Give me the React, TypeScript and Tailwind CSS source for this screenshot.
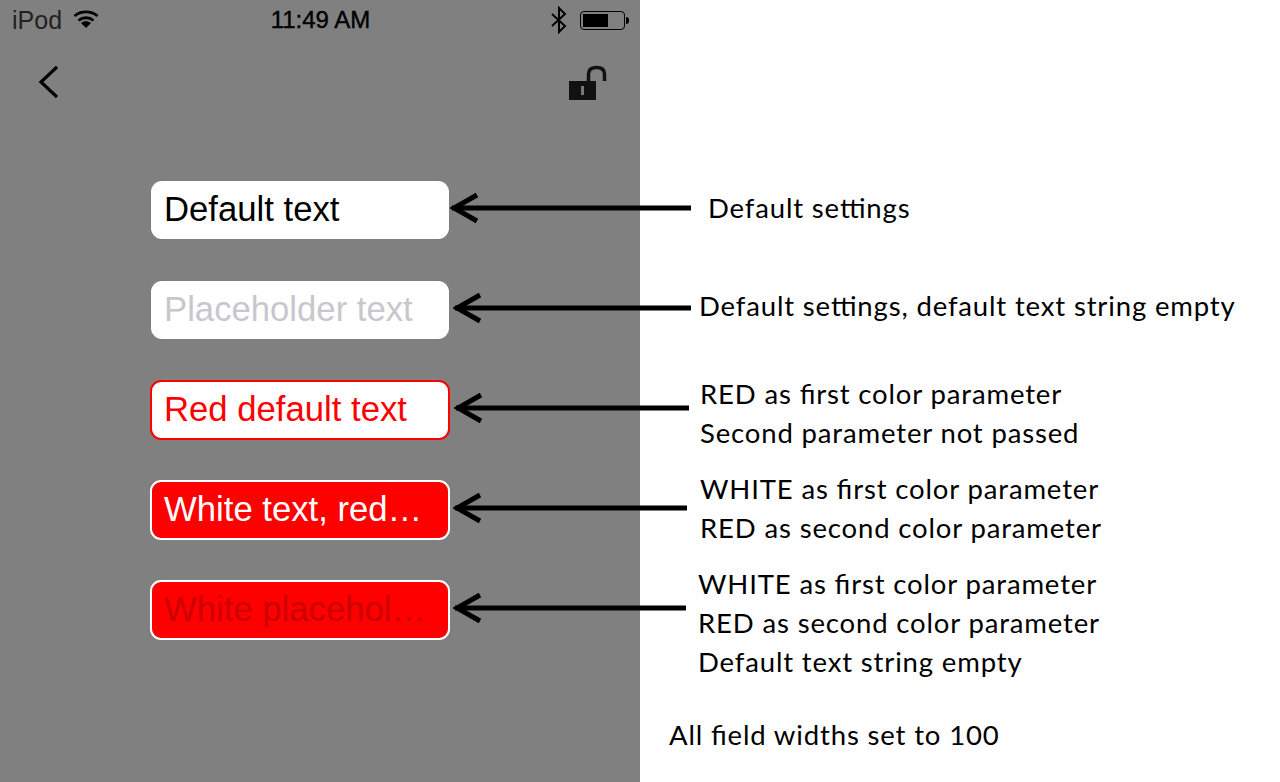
const fields = [
  {
    text: "Default text",
    box: "h-[58px] w-[298px] pl-[13px] bg-white text-black",
    arrow: "ml-[1px] w-[241px]",
    width: 241,
  },
  {
    text: "Placeholder text",
    box: "h-[58px] w-[298px] pl-[13px] bg-white text-[#c7c7cd]",
    arrow: "ml-[4px] w-[238px]",
    width: 238,
  },
  {
    text: "Red default text",
    box: "-m-[1px] h-[60px] w-[300px] pl-[12px] bg-white text-[#ff0000] border-2 border-[#ff0000]",
    arrow: "ml-[5px] w-[235px]",
    width: 235,
  },
  {
    text: "White text, red…",
    box: "-m-[1px] h-[60px] w-[300px] pl-[12px] bg-[#ff0000] text-white border-2 border-white",
    arrow: "ml-[4px] w-[234px]",
    width: 234,
  },
  {
    text: "White placehol…",
    box: "-m-[1px] h-[60px] w-[300px] pl-[12px] bg-[#ff0000] text-[#cc0000] border-2 border-white",
    arrow: "ml-[4px] w-[233px]",
    width: 233,
  },
];

const Arrow = ({ className, width }: { className: string; width: number }) => (
  <svg className={`absolute left-full top-0 -mt-[2px] h-[58px] ${className}`} viewBox={`0 0 ${width} 58`} fill="none" stroke="#000">
    <path d={`M2 29H${width}`} strokeWidth="5" />
    <path d="M27 16L4 29L27 42" strokeWidth="5" />
  </svg>
);

const StatusBar = () => (
  <div className="flex h-10 items-center justify-between pl-3 pr-[11px] text-[#000] font-['Liberation_Sans',sans-serif]">
    <div className="flex w-[200px] items-center">
      <span className="text-[25px] font-light leading-none text-[#222]">iPod</span>
      <svg className="ml-[11px] -mt-[3px] h-[18px] w-[26px]" viewBox="0 0 26 18" fill="none" stroke="#000" strokeWidth="2.8">
        <path d="M1.5 6C8 .6 18 .6 24.500 6" />
        <path d="M5.500 10.500C10 6.800 16 6.800 20.500 10.500" />
        <path d="M13 18L8 13C11 10.800 15 10.800 18 13Z" fill="#000" stroke="none" />
      </svg>
    </div>
    <span className="text-[24px] leading-none [-webkit-text-stroke:0.4px_#000]">11:49 AM</span>
    <div className="flex w-[200px] items-center justify-end">
      <svg className="mr-[12px] h-[28px] w-[18px]" viewBox="0 0 18 28" fill="none" stroke="#000" strokeWidth="2">
        <path d="M2 8L15 20L9 26V2L15 8L2 20" />
      </svg>
      <div className="flex items-center">
        <div className="h-[19px] w-[45px] rounded-[4px] border border-black p-[2px]">
          <div className="h-full w-[25px] bg-black" />
        </div>
        <div className="ml-[1px] h-[7px] w-[3px] rounded-r-full bg-black" />
      </div>
    </div>
  </div>
);

const NavBar = () => (
  <div className="mt-5 flex h-[44px] items-center justify-between pl-[38px] pr-[31px]">
    <svg className="h-[34px] w-[20px]" viewBox="0 0 20 34" fill="none" stroke="#000" strokeWidth="3.2">
      <path d="M19 2L3 17L19 32" />
    </svg>
    <svg className="mt-[1px] h-[36px] w-[40px]" viewBox="0 0 40 36">
      <rect x="0" y="16" width="27" height="19" fill="#111" />
      <rect x="12" y="21" width="3" height="9" fill="#777" />
      <path d="M19.500 16V9C19.500 4.500 22.500 2.500 27.500 2.500C33 2.500 35.500 5 35.500 9V16" fill="none" stroke="#111" strokeWidth="3.500" />
    </svg>
  </div>
);

const Label = ({ lines, className }: { lines: string[]; className: string }) => (
  <div className={`absolute ${className}`}>
    {lines.map((line) => (
      <div key={line} className="whitespace-nowrap">{line}</div>
    ))}
  </div>
);

export default function App() {
  return (
    <div className="flex h-[782px] w-[1280px] overflow-hidden bg-white">
      <div className="relative z-10 h-full w-[640px] bg-[#808080]">
        <StatusBar />
        <NavBar />
        <div className="mt-[77px] flex flex-col gap-[42px] pl-[151px]">
          {fields.map((f) => (
            <div key={f.text} className="relative h-[58px] w-[298px]">
              <div className={`flex items-center rounded-[11px] font-['Liberation_Sans',sans-serif] text-[34.700px] ${f.box}`}>
                <span className="-mt-[1px] whitespace-nowrap">{f.text}</span>
              </div>
              <Arrow className={f.arrow} width={f.width} />
            </div>
          ))}
        </div>
      </div>
      <div className="relative h-full w-[640px] font-['Lato',sans-serif] text-[27.500px] leading-[39px] tracking-[0.85px] text-black [font-feature-settings:'liga'_1]">
        <Label className="left-[68px] top-[188px]" lines={["Default settings"]} />
        <Label className="left-[59px] top-[286px]" lines={["Default settings, default text string empty"]} />
        <Label className="left-[60px] top-[374px]" lines={["RED as first color parameter", "Second parameter not passed"]} />
        <Label className="left-[60px] top-[469px]" lines={["WHITE as first color parameter", "RED as second color parameter"]} />
        <Label className="left-[58px] top-[564px]" lines={["WHITE as first color parameter", "RED as second color parameter", "Default text string empty"]} />
        <Label className="left-[29px] top-[715px]" lines={["All field widths set to 100"]} />
      </div>
    </div>
  );
}
